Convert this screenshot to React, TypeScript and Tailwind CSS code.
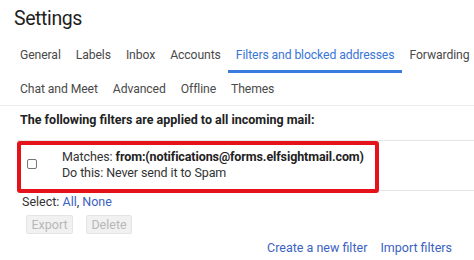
const tabsTop = ["General", "Labels", "Inbox", "Accounts", "Filters and blocked addresses", "Forwarding"]
const tabsBottom = ["Chat and Meet", "Advanced", "Offline", "Themes"]
const active = "Filters and blocked addresses"

function Tab({ label }: { label: string }) {
  const isActive = label === active
  return (
    <div
      className={
        isActive
          ? "flex shrink-0 items-center whitespace-nowrap border-b-[3px] border-[#3a7be0] px-[7.5px] text-[#3a76d6]"
          : "flex shrink-0 items-center whitespace-nowrap border-b-[3px] border-transparent px-[7.5px] text-[#4a4a4a]"
      }
    >
      {label}
    </div>
  )
}

export default function App() {
  return (
    <div
      className="relative h-[260px] w-[474px] overflow-hidden bg-white text-[12.5px] leading-4 text-[#222]"
      style={{ fontFamily: "Roboto, 'Liberation Sans', sans-serif" }}
    >
      <h1 className="pl-[14px] pt-[7px] text-[19.5px] leading-6 tracking-[-0.4px] text-[#1f1f1f]">Settings</h1>

      <nav className="mt-[9px] border-b border-[#ececec] pl-[12.5px] text-[12.2px] tracking-[-0.1px]">
        <div className="flex h-[33px]">
          {tabsTop.map((t) => (
            <Tab key={t} label={t} />
          ))}
        </div>
        <div className="flex h-[32px] items-center">
          {tabsBottom.map((t) => (
            <div key={t} className="shrink-0 whitespace-nowrap px-[7.5px] text-[#4a4a4a]">
              {t}
            </div>
          ))}
        </div>
      </nav>

      <p className="mt-[6px] pl-5 font-bold text-[#222]">
        The following filters are applied to all incoming mail:
      </p>

      <div className="relative ml-[17px] mt-[12px] flex h-[51px] border-y border-[#e6e6e6]">
        <div className="pl-[10px] pt-[18px]">
          <div className="size-[10px] rounded-[2px] border border-[#777]" />
        </div>
        <div className="pl-[25px] pt-[8px] tracking-[-0.1px] text-[#333]">
          <div>
            Matches: <span className="font-bold text-[#222]">from:(notifications@forms.elfsightmail.com)</span>
          </div>
          <div>Do this: Never send it to Spam</div>
        </div>
        <div className="absolute left-0 top-0 h-[52px] w-[362px] rounded-[3px] border-4 border-[#e5121b]" />
      </div>

      <div className="mt-[3px] pl-[22px] text-[#333]">
        Select: <span className="text-[#3b62c2]">All</span>,{" "}
        <span className="text-[#3b62c2]">None</span>
      </div>

      <div className="mt-[5px] flex gap-[13px] pl-[26px]">
        <button className="h-[19px] w-[47px] rounded-[2px] border border-[#e4e4e4] bg-[#f1f1f1] text-[12.5px] text-[#b8b8b8]">
          Export
        </button>
        <button className="h-[19px] w-[46px] rounded-[2px] border border-[#e4e4e4] bg-[#f1f1f1] text-[12.5px] text-[#b8b8b8]">
          Delete
        </button>
      </div>

      <div className="mt-[6px] flex justify-end gap-[13px] pr-[22px] text-[#3b62c2]">
        <span>Create a new filter</span>
        <span>Import filters</span>
      </div>
    </div>
  )
}
